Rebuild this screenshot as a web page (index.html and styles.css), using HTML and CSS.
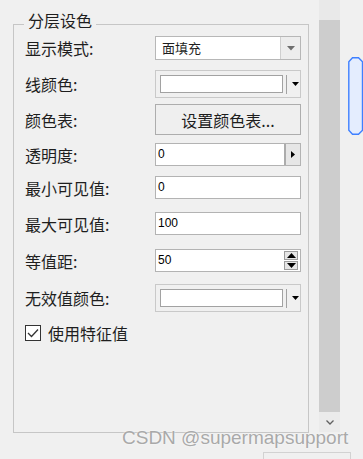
FILE: index.html
```html
<!DOCTYPE html>
<html lang="zh-CN">
<head>
    <meta charset="UTF-8">
    <meta name="viewport" content="width=device-width, initial-scale=1.0">
    <title>分层设色</title>
    <link rel="stylesheet" href="styles.css">
</head>
<body>
    <div class="pantalla">
        <div class="arriba">
            <!-- Panel principal -->
            <div class="panel">
                <div class="grupo">
                    <span class="leyenda">分层设色</span>

                    <div class="fila f1">
                        <span class="etiqueta">显示模式:</span>
                        <div class="combo">
                            <span class="combo-texto">面填充</span>
                            <span class="combo-boton">
                                <svg width="8" height="5" viewBox="0 0 8 5"><path d="M0 0H8L4 4.5Z" fill="#6e6e6e"/></svg>
                            </span>
                        </div>
                    </div>

                    <div class="fila f2">
                        <span class="etiqueta">线颜色:</span>
                        <div class="color">
                            <span class="muestra"></span>
                            <span class="separador"></span>
                            <svg class="flecha" width="7" height="4" viewBox="0 0 7 4"><path d="M0 0H7L3.5 4Z" fill="#000"/></svg>
                        </div>
                    </div>

                    <div class="fila f3">
                        <span class="etiqueta">颜色表:</span>
                        <button class="boton">设置颜色表...</button>
                    </div>

                    <div class="fila f4">
                        <span class="etiqueta">透明度:</span>
                        <div class="numero">
                            <span class="valor">0</span>
                            <span class="lado">
                                <svg width="4" height="7" viewBox="0 0 4 7"><path d="M0 0V7L4 3.5Z" fill="#000"/></svg>
                            </span>
                        </div>
                    </div>

                    <div class="fila f5">
                        <span class="etiqueta">最小可见值:</span>
                        <div class="numero"><span class="valor">0</span></div>
                    </div>

                    <div class="fila f6">
                        <span class="etiqueta">最大可见值:</span>
                        <div class="numero"><span class="valor">100</span></div>
                    </div>

                    <div class="fila f7">
                        <span class="etiqueta">等值距:</span>
                        <div class="numero">
                            <span class="valor">50</span>
                            <span class="giro">
                                <span class="giro-btn">
                                    <svg width="9" height="5" viewBox="0 0 9 5"><path d="M0 5H9L4.5 0Z" fill="#000"/></svg>
                                </span>
                                <span class="giro-btn">
                                    <svg width="9" height="5" viewBox="0 0 9 5"><path d="M0 0H9L4.5 5Z" fill="#000"/></svg>
                                </span>
                            </span>
                        </div>
                    </div>

                    <div class="fila f8">
                        <span class="etiqueta">无效值颜色:</span>
                        <div class="color">
                            <span class="muestra"></span>
                            <span class="separador"></span>
                            <svg class="flecha" width="7" height="4" viewBox="0 0 7 4"><path d="M0 0H7L3.5 4Z" fill="#000"/></svg>
                        </div>
                    </div>

                    <label class="fila f9">
                        <span class="casilla">
                            <svg width="12" height="10" viewBox="0 0 12 10"><path d="M1 5L4.5 8.5L11 1.5" fill="none" stroke="#333" stroke-width="1.3"/></svg>
                        </span>
                        <span class="casilla-texto">使用特征值</span>
                    </label>
                </div>
            </div>

            <!-- Barra de desplazamiento -->
            <div class="barra">
                <div class="barra-tope"></div>
                <div class="barra-pista"></div>
                <div class="barra-abajo">
                    <svg width="8" height="5" viewBox="0 0 8 5"><path d="M0.5 0.5L4 4L7.5 0.5" fill="none" stroke="#606060" stroke-width="1.3"/></svg>
                </div>
            </div>

            <div class="asa">
                <svg width="15" height="78" viewBox="0 0 15 78"><path d="M4.5 0.8H10.5L14.5 4.8V73.2L10.5 77.2H4.5L0.8 73.2V4.8Z" fill="#e4edfe" stroke="#3f80ff" stroke-width="1.4"/></svg>
            </div>
        </div>

        <div class="abajo">
            <div class="caja-abajo"></div>
        </div>

        <span class="marca">CSDN @supermapsupport</span>
    </div>
</body>
</html>
```

FILE: styles.css
```css
body {
    margin: 0;
    background-color: #f0f0f0;
    font-family: "Noto Sans CJK SC", "Noto Sans", sans-serif;
    color: #1e1e1e;
    overflow: hidden;
}

.pantalla {
    position: relative;
    width: 363px;
    height: 459px;
    display: flex;
    flex-direction: column;
}

.arriba {
    display: flex;
    height: 452px;
}

.panel {
    width: 319px;
    padding: 24px 0 0 13px;
    box-sizing: border-box;
}

.grupo {
    position: relative;
    width: 296px;
    height: 409px;
    box-sizing: border-box;
    border: 1px solid #c6c6c6;
    padding: 11px 0 0 11px;
}

.leyenda {
    position: absolute;
    top: -16px;
    left: 10px;
    padding: 0 4px;
    background-color: #f0f0f0;
    font-size: 16px;
    line-height: 22px;
}

.fila {
    display: flex;
    align-items: center;
}

.f2 { margin-top: 10px; }
.f3 { margin-top: 6px; }
.f4 { margin-top: 8px; }
.f5 { margin-top: 10px; }
.f6 { margin-top: 13px; }
.f7 { margin-top: 14px; }
.f8 { margin-top: 12px; }
.f9 { margin-top: 11px; }

.etiqueta {
    width: 130px;
    font-size: 16px;
    line-height: 20px;
}

/* Combo */
.combo {
    width: 146px;
    height: 24px;
    box-sizing: border-box;
    border: 1px solid #b7b7b7;
    background-color: #fff;
    display: flex;
}

.combo-texto {
    flex: 1;
    padding-left: 6px;
    font-size: 13px;
    line-height: 22px;
}

.combo-boton {
    width: 19px;
    border-left: 1px solid #cfcfcf;
    background-color: #ededed;
    display: flex;
    align-items: center;
    justify-content: center;
}

/* Selector de color */
.color {
    width: 146px;
    height: 28px;
    box-sizing: border-box;
    border: 1px solid #c9c9c9;
    padding-left: 4px;
    display: flex;
    align-items: center;
}

.muestra {
    width: 123px;
    height: 18px;
    box-sizing: border-box;
    border: 1px solid #a2a2a2;
    background-color: #fff;
}

.separador {
    width: 1px;
    height: 19px;
    margin-left: 3px;
    background-color: #a2a2a2;
}

.flecha {
    margin-left: 5px;
}

/* Botón */
.boton {
    width: 146px;
    height: 31px;
    border: 1px solid #adadad;
    background-color: #efefef;
    font-family: "Noto Sans CJK SC", "Noto Sans", sans-serif;
    font-size: 16px;
    color: #1e1e1e;
    padding: 0;
}

/* Campos numéricos */
.numero {
    width: 146px;
    height: 23px;
    box-sizing: border-box;
    border: 1px solid #b3b3b3;
    background-color: #fff;
    display: flex;
}

.valor {
    flex: 1;
    padding-left: 2px;
    font-family: "Liberation Sans", Arial, sans-serif;
    font-size: 12px;
    line-height: 21px;
    color: #000;
}

.lado {
    width: 14px;
    border-left: 2px solid #acacac;
    background-color: #e6e6e6;
    display: flex;
    align-items: center;
    justify-content: center;
}

.giro {
    width: 14px;
    margin: 1px 2px 0 0;
    display: flex;
    flex-direction: column;
    gap: 1px;
}

.giro-btn {
    height: 9px;
    box-sizing: border-box;
    border: 1px solid #9c9c9c;
    background-color: #e6e6e6;
    display: flex;
    align-items: center;
    justify-content: center;
}

/* Casilla */
.casilla {
    width: 16px;
    height: 16px;
    box-sizing: border-box;
    border: 1px solid #333;
    background-color: #fff;
    display: flex;
    align-items: center;
    justify-content: center;
}

.casilla-texto {
    margin-left: 7px;
    font-size: 16px;
    line-height: 20px;
}

/* Barra de desplazamiento */
.barra {
    width: 21px;
    display: flex;
    flex-direction: column;
}

.barra-tope {
    height: 20px;
    background-color: #e9e9e9;
}

.barra-pista {
    height: 392px;
    background-color: #cdcdcd;
}

.barra-abajo {
    height: 20px;
    background-color: #ebebeb;
    display: flex;
    align-items: center;
    justify-content: center;
}

.asa {
    padding: 57px 0 0 8px;
}

.abajo {
    flex: 1;
    padding-left: 263px;
}

.caja-abajo {
    width: 88px;
    height: 7px;
    box-sizing: border-box;
    border: 1px solid #d2d2d2;
    border-bottom: none;
}

.marca {
    position: absolute;
    left: 122px;
    top: 427px;
    font-family: "Liberation Sans", Arial, sans-serif;
    font-size: 19px;
    color: #a9a9a9;
    text-shadow: 0 0 2px #fff;
    white-space: nowrap;
}
```
